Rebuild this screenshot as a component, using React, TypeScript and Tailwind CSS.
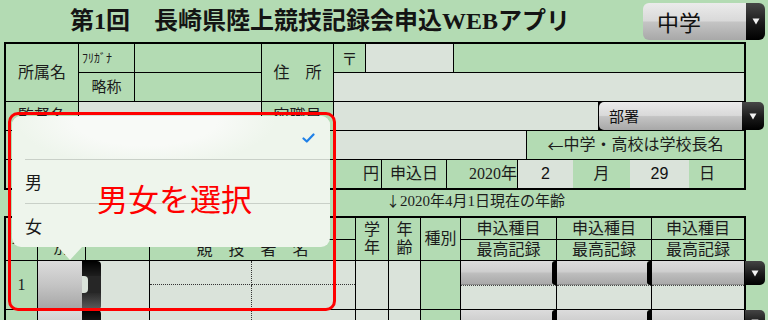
import React from "react";

const serif = "font-['Liberation_Serif','Noto_Sans_CJK_JP',serif]";
const sans = "font-['Liberation_Sans','Noto_Sans_CJK_JP',sans-serif]";
const cjk = "font-['Noto_Sans_CJK_JP',sans-serif]";

function Tri() {
  return (
    <svg width="8" height="7" viewBox="0 0 8 7">
      <path d="M0.5 0.5H7.5L4 6.5Z" fill="#f2f2f2" />
    </svg>
  );
}

type LP = {
  children?: React.ReactNode;
  className?: string;
  j?: string;
  size?: string;
  f?: string;
};

function L({ children, className = "", j = "justify-center", size = "text-[16px]", f = serif }: LP) {
  return (
    <div className={`flex shrink-0 items-center bg-[#b3dbb3] leading-none text-[#1c1c1c] ${j} ${size} ${f} ${className}`}>
      {children}
    </div>
  );
}

function I({ className = "" }: { className?: string }) {
  return <div className={`shrink-0 bg-[#dae3da] ${className}`} />;
}

function Sex() {
  return (
    <div className="relative bg-[#dae3da]">
      <div className="h-full w-[44px] bg-[linear-gradient(to_bottom,#dcdcdc,#c4c4c4_50%,#a6a6a6)]" />
      <div className="absolute left-[44px] top-0 z-10 flex h-full w-[19px] flex-col">
        <div className="h-[15px] rounded-tr-[4px] bg-[linear-gradient(to_bottom,#000,#1e1e1e)]" />
        <div className="h-[17px] bg-[#262626]">
          <div className="h-full w-[6px] rounded-r-[4px] bg-[#dae3da]" />
        </div>
        <div className="flex-1 rounded-br-[3px] bg-[linear-gradient(to_bottom,#2a2a2a,#5a5a5a)]" />
      </div>
    </div>
  );
}

function NameCell() {
  return (
    <div className="grid grid-cols-[102px_1fr] grid-rows-[24px_1fr] bg-[#dae3da]">
      <div className="border-b border-r border-dotted border-[#333]" />
      <div className="border-b border-dotted border-[#333]" />
      <div className="border-r border-dotted border-[#333]" />
      <div />
    </div>
  );
}

function Ev({ last = false }: { last?: boolean }) {
  return (
    <div className="relative flex flex-col bg-[#dae3da]">
      <div className="flex h-[24px]">
        <div className="flex-1 border-b border-[#8a8a8a] bg-[linear-gradient(to_bottom,#dcdcdc_0%,#cfcfcf_45%,#bdbdbd_55%,#a9a9a9_100%)]" />
        {last ? null : <div className="w-[4px] rounded-l-[3px] bg-black" />}
      </div>
      <div className="flex-1 border-t border-dotted border-[#444]" />
      {last ? (
        <div className="absolute right-[-21px] top-0 z-10 flex h-[24px] w-[20px] items-center justify-center rounded-r-[5px] bg-[linear-gradient(to_bottom,#444,#1a1a1a_55%,#000)]">
          <Tri />
        </div>
      ) : null}
    </div>
  );
}

function DataRow({ n }: { n: string }) {
  return (
    <>
      <L>{n}</L>
      <Sex />
      <I />
      <NameCell />
      <I />
      <I />
      <L />
      <Ev />
      <Ev />
      <Ev last />
    </>
  );
}

export default function App() {
  return (
    <div className="relative h-[320px] w-[768px] overflow-hidden bg-[#b3dbb3]">
      {/* header */}
      <div className="flex h-[42px] items-start">
        <h1 className={`pl-[70px] text-[24px] font-bold leading-[42px] text-[#141414] ${serif}`}>
          第1回　長崎県陸上競技記録会申込WEBアプリ
        </h1>
        <div className="ml-auto mr-[3px] mt-[3px] flex h-[37px] w-[122px]">
          <div
            className={`flex-1 rounded-l-[6px] bg-[linear-gradient(to_bottom,#ebebeb_0%,#d9d9d9_48%,#c4c4c4_52%,#a8a8a8_100%)] pl-[14px] text-[22px] leading-[37px] text-[#111] ${cjk}`}
          >
            中学
          </div>
          <div className="flex w-[19px] items-start justify-center rounded-r-[6px] bg-[linear-gradient(to_bottom,#474747,#1a1a1a_55%,#000)] pt-[15px]">
            <Tri />
          </div>
        </div>
      </div>

      {/* table 1 */}
      <div className="ml-[4px] flex w-[742px] flex-col gap-px border-2 border-black bg-black">
        <div className="grid grid-cols-[72px_55px_126px_71px_31px_87px_290px] grid-rows-[28px_28px] gap-px">
          <L className="row-span-2">所属名</L>
          <L j="justify-start" size="text-[12px]" f={cjk} className="pl-[3px]">
            ﾌﾘｶﾞﾅ
          </L>
          <L />
          <L className="row-span-2">住　所</L>
          <L f={cjk}>〒</L>
          <I />
          <L />
          <L size="text-[15px]">略称</L>
          <L />
          <I className="col-span-3" />
        </div>
        <div className="flex h-[28px] gap-px">
          <L className="w-[72px]">監督名</L>
          <I className="w-[182px]" />
          <L className="w-[71px]">宛職員</L>
          <I className="w-[264px]" />
          <div className="relative flex-1">
            <div className="absolute left-0 top-0 z-10 flex h-[28px] w-[165px]">
              <div
                className={`flex-1 rounded-l-[5px] bg-[linear-gradient(to_bottom,#ebebeb_0%,#d9d9d9_48%,#c4c4c4_52%,#a8a8a8_100%)] pl-[10px] text-[15px] leading-[28px] text-[#111] ${cjk}`}
              >
                部署
              </div>
              <div className="flex w-[22px] items-center justify-center rounded-r-[5px] bg-[linear-gradient(to_bottom,#474747,#1a1a1a_55%,#000)]">
                <Tri />
              </div>
            </div>
          </div>
        </div>
        <div className="flex h-[28px] gap-px">
          <L className="w-[72px]">代表者</L>
          <I className="w-[182px]" />
          <L className="w-[71px]">職　名</L>
          <I className="w-[192px]" />
          <L className="flex-1">
            <span className={cjk}>←</span>中学・高校は学校長名
          </L>
        </div>
        <div className="flex h-[28px] gap-px">
          <L className="w-[72px]">申込者</L>
          <I className="w-[182px]" />
          <L className="w-[71px]">参加料</L>
          <L j="justify-end" className="w-[47px] pr-[2px]">
            円
          </L>
          <L className="w-[64px]">申込日</L>
          <L j="justify-end" className="w-[70px]">
            2020年
          </L>
          <div className="flex flex-1">
            <div className={`flex w-[55px] items-center justify-center bg-[#dae3da] text-[16px] text-[#111] ${sans}`}>2</div>
            <L className="w-[57px]">月</L>
            <div className={`flex w-[59px] items-center justify-center bg-[#dae3da] text-[16px] text-[#111] ${sans}`}>29</div>
            <L j="justify-start" className="flex-1 pl-[10px]">
              日
            </L>
          </div>
        </div>
      </div>

      {/* note */}
      <div className={`h-[26px] pl-[386px] pt-[1px] text-[15px] leading-[18px] text-[#1c1c1c] ${serif}`}>
        <span className={`text-[14px] ${cjk}`}>↓</span>2020年4月1日現在の年齢
      </div>

      {/* table 2 */}
      <div className="ml-[4px] w-[742px] border-2 border-black bg-black">
        <div className="grid grid-cols-[31px_47px_63px_205px_32px_31px_39px_95px_94px_92px] grid-rows-[21px_20px_48px_48px] gap-px">
          <L className="row-span-2">No</L>
          <L className="row-span-2">
            <div className="text-center leading-[18px]">
              性<br />別
            </div>
          </L>
          <L className="row-span-2" />
          <L>フ　リ　ガ　ナ</L>
          <L className="row-span-2">
            <div className="text-center leading-[18px]">
              学<br />年
            </div>
          </L>
          <L className="row-span-2">
            <div className="text-center leading-[18px]">
              年<br />齢
            </div>
          </L>
          <L className="row-span-2">種別</L>
          <L>申込種目</L>
          <L>申込種目</L>
          <L>申込種目</L>
          <L>競　技　者　名</L>
          <L>最高記録</L>
          <L>最高記録</L>
          <L>最高記録</L>
          <DataRow n="1" />
          <DataRow n="" />
        </div>
      </div>

      {/* popup */}
      <div className={`absolute left-[12px] top-[116px] z-20 h-[131px] w-[318px] rounded-[9px] bg-[#eef5ec] ${cjk}`}>
        <div className="relative h-[43px] rounded-t-[9px] bg-[radial-gradient(ellipse_130px_48px_at_42%_8%,#f8faf7_55%,#eef5ec_100%)]">
          <svg className="absolute left-[290px] top-[17px]" width="13" height="10" viewBox="0 0 13 10">
            <path d="M1.5 5.5L4.8 8.5L11.5 1.5" stroke="#1f80e8" strokeWidth="2.2" fill="none" strokeLinecap="round" strokeLinejoin="round" />
          </svg>
        </div>
        <div className="ml-[13px] h-px bg-[#c9d0c8]" />
        <div className="flex h-[43px] items-center pl-[13px] text-[17px] text-[#1a1a1a]">男</div>
        <div className="ml-[13px] h-px bg-[#c9d0c8]" />
        <div className="flex h-[43px] items-center pl-[13px] text-[17px] text-[#1a1a1a]">女</div>
        <div className="absolute left-[46px] top-full h-0 w-0 border-x-[12px] border-t-[13px] border-x-transparent border-t-[#eef5ec]" />
      </div>

      {/* annotation */}
      <div className="absolute left-[8px] top-[112px] z-30 h-[199px] w-[328px] rounded-[10px] border-[3px] border-[#ff0000]" />
      <div className={`absolute left-[97px] top-[182px] z-30 text-[31px] leading-[31px] text-[#ff0000] ${cjk}`}>男女を選択</div>
    </div>
  );
}
